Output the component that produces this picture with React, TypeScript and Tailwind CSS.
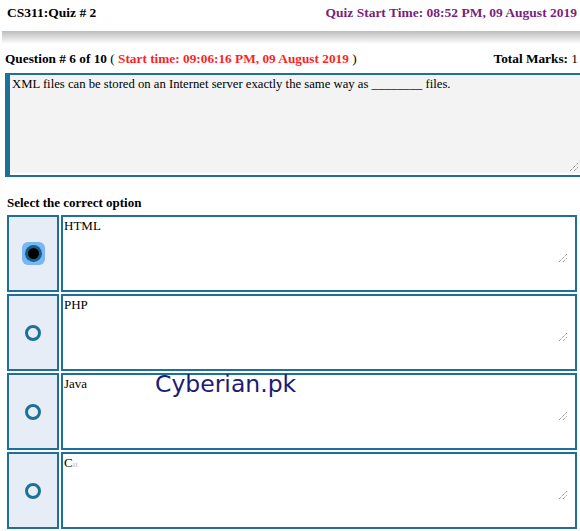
const options = ["HTML", "PHP", "Java", "C++"];

function Grip({ className }: { className: string }) {
  return (
    <svg width="9" height="9" viewBox="0 0 9 9" className={className}>
      <line x1="1" y1="9" x2="9" y2="1" stroke="#6b6b6b" strokeWidth="1" strokeDasharray="1 1" />
      <line x1="5" y1="9" x2="9" y2="5" stroke="#6b6b6b" strokeWidth="1" strokeDasharray="1 1" />
    </svg>
  );
}

function Radio({ checked }: { checked: boolean }) {
  if (checked) {
    return (
      <div className="flex h-[23px] w-[23px] items-center justify-center rounded-[6px] bg-[#78b6f6]">
        <div className="flex h-[17px] w-[17px] items-center justify-center rounded-full bg-[#1b5f82]">
          <div className="h-[11px] w-[11px] rounded-full bg-black" />
        </div>
      </div>
    );
  }
  return <div className="h-[16px] w-[16px] rounded-full border-[3px] border-[#1f7099]" />;
}

export default function App() {
  return (
    <div className="relative w-[580px] bg-white text-black" style={{ fontFamily: '"Liberation Serif", "Times New Roman", serif' }}>
      {/* header */}
      <div className="flex h-[31px] items-start justify-between pl-[7px] pr-[3px] pt-[3px] text-[13.5px] font-bold">
        <span>CS311:Quiz # 2</span>
        <span className="text-[#7a1f7c]">Quiz Start Time: 08:52 PM, 09 August 2019</span>
      </div>
      <div className="ml-[2px] h-[13px] bg-gradient-to-b from-[#bcbcbc] to-white" />

      {/* question */}
      <div className="mb-[4px] mt-[5px] flex items-center justify-between pl-[5px] pr-[2px] text-[13.3px] leading-[20px]">
        <span>
          <b>Question # 6 of 10</b> ( <b className="text-[#ff1f1f]">Start time: 09:06:16 PM, 09 August 2019</b> )
        </span>
        <span className="text-black">
          <b>Total Marks:</b> 1
        </span>
      </div>
      <div className="ml-[5px] border-b-2 border-l-[5px] border-t-2 border-[#1f7099] bg-white pb-[2px]">
        <div className="relative h-[98px] bg-[#f3f3f3] px-[2px] pt-[1px] text-[12.7px] leading-[16px]">
          XML files can be stored on an Internet server exactly the same way as ________ files.
          <Grip className="absolute bottom-[2px] right-[2px]" />
        </div>
      </div>

      <div className="mt-[17px] pl-[7px] text-[13px] font-bold leading-[18px]">Select the correct option</div>

      {/* options */}
      <div className="mt-[3px] flex flex-col gap-[2px] pl-[7px] pr-[3px]">
        {options.map((opt, i) => (
          <div key={opt} className="flex h-[77px] gap-[2px]">
            <div className="flex w-[52px] items-center justify-center border-2 border-[#1f7099] bg-[#e7edf7]">
              <Radio checked={i === 0} />
            </div>
            <div className="relative flex-1 border-2 border-[#1f7099] bg-white px-[1px] pt-[1px] text-[13px] leading-[16px]">
              {opt === "C++" ? (
                <span>
                  C<span className="text-[9px] text-[#c9b48e]">ıı</span>
                </span>
              ) : (
                opt
              )}
              <Grip className="absolute right-[8px] top-[36px]" />
            </div>
          </div>
        ))}
      </div>

      {/* watermark */}
      <div
        className="absolute left-[155px] top-[369px] text-[23.5px] leading-[30px] text-[#1c1c72]"
        style={{ fontFamily: '"DejaVu Sans", Verdana, sans-serif' }}
      >
        Cyberian.pk
      </div>
    </div>
  );
}
